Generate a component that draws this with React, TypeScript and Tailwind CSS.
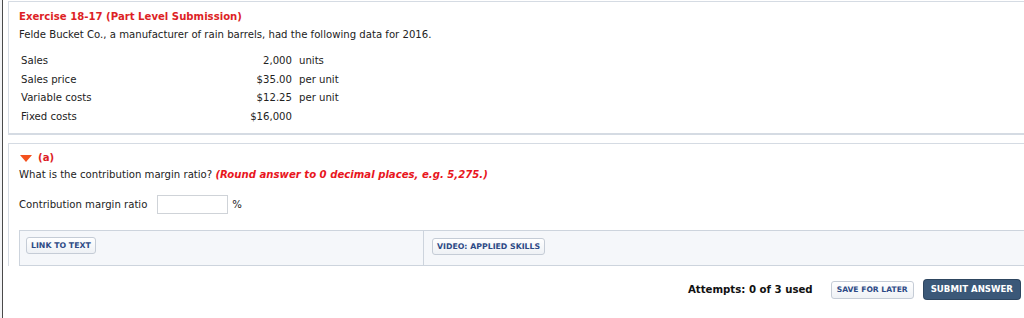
import React from "react";

const rows = [
  { label: "Sales", value: "2,000", unit: "units" },
  { label: "Sales price", value: "$35.00", unit: "per unit" },
  { label: "Variable costs", value: "$12.25", unit: "per unit" },
  { label: "Fixed costs", value: "$16,000", unit: "" },
];

export default function App() {
  return (
    <div className="h-[318px] w-[1024px] overflow-hidden bg-[#f3f4f6] font-['DejaVu_Sans',_Verdana,_sans-serif] text-[#222] text-[10.15px]">
      <div className="ml-[2px] h-full border-l border-[#4a4a4a] bg-white pl-[5px] pt-[1px]">
        {/* Panel 1 */}
        <div className="h-[134px] border-l border-t border-b-2 border-[#d5dbe3] bg-white pl-[10px] pt-[8px]">
          <div className="font-bold text-[#dd1f26] leading-[14px]">Exercise 18-17 (Part Level Submission)</div>
          <div className="mt-[4px] leading-[14px]">Felde Bucket Co., a manufacturer of rain barrels, had the following data for 2016.</div>
          <div className="mt-[10px] pl-[2px]">
            {rows.map((r) => (
              <div key={r.label} className="flex h-[18.5px] items-center leading-[14px]">
                <div className="w-[180px]">{r.label}</div>
                <div className="w-[91px] text-right">{r.value}</div>
                <div className="pl-[7px]">{r.unit}</div>
              </div>
            ))}
          </div>
        </div>
        {/* Panel 2 */}
        <div className="mt-[8px] border-l border-t border-[#d5dbe3] bg-white pl-[10px] pt-[7px]">
          <div className="flex items-center leading-[14px]">
            <svg width="12" height="7" viewBox="0 0 12 7" className="ml-[1px] mr-[6px]">
              <polygon points="0,0 12,0 6,7" fill="#f4511e" />
            </svg>
            <span className="font-bold text-[#dd1f26]">(a)</span>
          </div>
          <div className="mt-[3px] leading-[14px]">
            What is the contribution margin ratio?{" "}
            <span className="font-bold italic text-[#e8161d]">(Round answer to 0 decimal places, e.g. 5,275.)</span>
          </div>
          <div className="mt-[13px] flex items-center leading-[14px]">
            <span>Contribution margin ratio</span>
            <div className="ml-[10px] h-[19px] w-[71px] border border-[#cfd3d8] bg-white" />
            <span className="ml-[4px]">%</span>
          </div>
          <div className="mt-[16px] flex h-[36px] border-t border-b border-l border-[#cdd4dd] bg-[#f5f7fa]">
            <div className="w-[404px] border-r border-[#cdd4dd] pl-[6px] pt-[6px]">
              <button className="h-[17px] rounded-[3px] border border-[#c5ccd6] bg-gradient-to-b from-white to-[#eef1f5] px-[4px] text-[7.8px] font-bold leading-[15px] text-[#2d4a86]">
                LINK TO TEXT
              </button>
            </div>
            <div className="pl-[8px] pt-[7px]">
              <button className="h-[17px] rounded-[3px] border border-[#c5ccd6] bg-gradient-to-b from-white to-[#eef1f5] px-[4px] text-[7.8px] font-bold leading-[15px] text-[#2d4a86]">
                VIDEO: APPLIED SKILLS
              </button>
            </div>
          </div>
        </div>
        {/* Bottom */}
        <div className="mt-[14px] flex items-center justify-end pr-[4px]">
          <span className="font-bold text-[10.2px] text-[#111]">Attempts: 0 of 3 used</span>
          <button className="ml-[18px] h-[18px] rounded-[3px] border border-[#c5ccd6] bg-gradient-to-b from-white to-[#eef1f5] px-[5px] text-[7.6px] font-bold leading-[16px] text-[#2d4a86]">
            SAVE FOR LATER
          </button>
          <button className="ml-[10px] h-[19px] rounded-[3px] bg-[#3b5878] px-[7px] text-[8.6px] font-bold leading-[19px] text-white shadow-[0_0_0_1px_#2e4660]">
            SUBMIT ANSWER
          </button>
        </div>
      </div>
    </div>
  );
}
